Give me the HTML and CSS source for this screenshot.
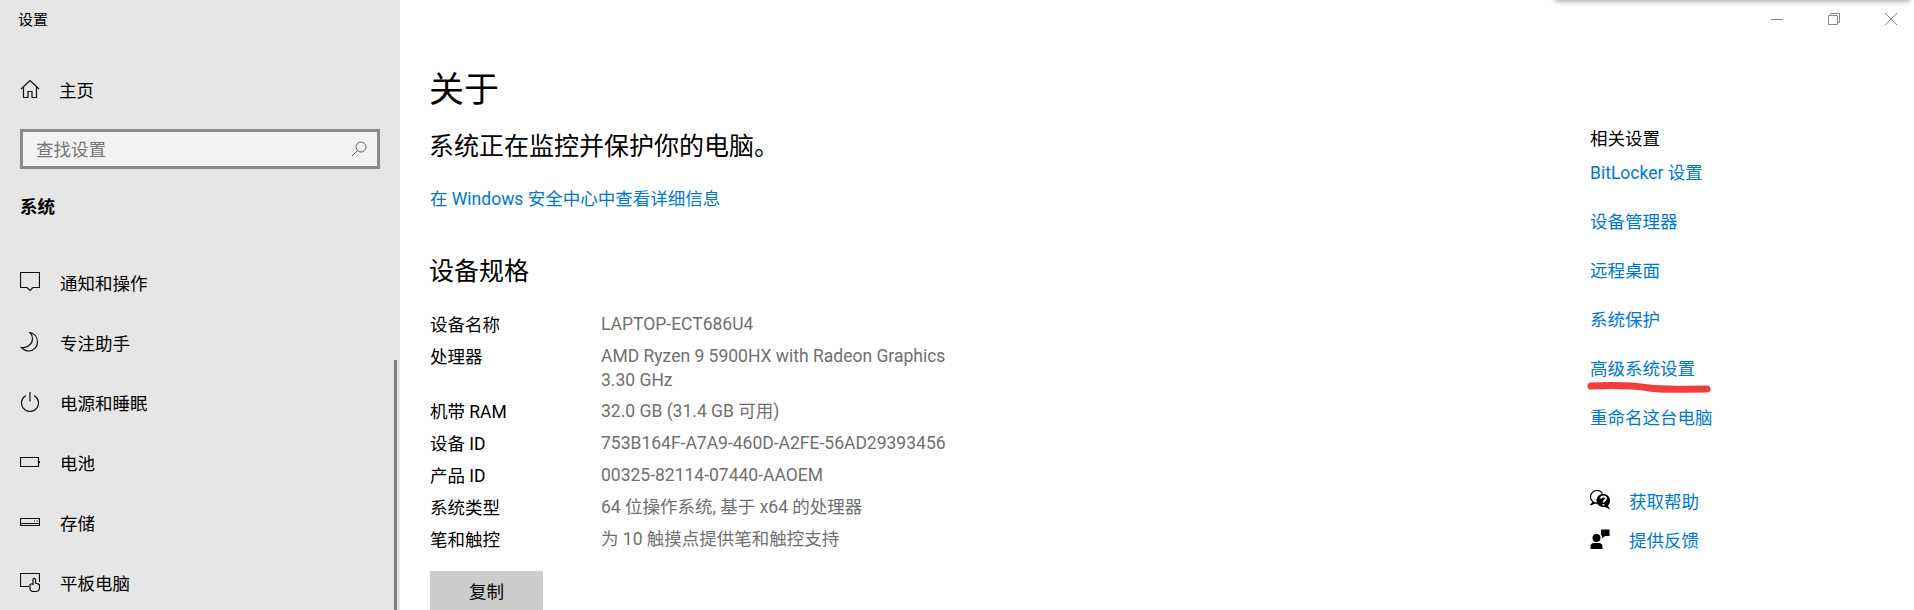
FILE: index.html
```html
<!DOCTYPE html>
<html lang="zh-CN">
  <head>
    <meta charset="UTF-8" />
    <title>设置</title>
    <link rel="stylesheet" href="styles.css">
  </head>
  <body>
    <aside class="sidebar">
      <div class="app-title">设置</div>
      <div class="home-row">
        <svg class="nav-icon" viewBox="0 0 20 20"><path d="M1 10 10 1.500 19 10M3.500 8V18.500H8V12.500H12V18.500H16.500V8"/></svg>
        <span>主页</span>
      </div>
      <div class="search-box">
        <span>查找设置</span>
        <svg class="search-icon" viewBox="0 0 16 16"><circle cx="10" cy="6" r="5"/><path d="M6.500 9.500 1 15"/></svg>
      </div>
      <div class="group-title">系统</div>
      <nav class="nav-list">
        <div class="nav-item">
          <svg class="nav-icon" viewBox="0 0 20 20"><path d="M.500 .500H19.500V15.500H13L10 18.500 7 15.500H.500Z"/></svg>
          <span>通知和操作</span>
        </div>
        <div class="nav-item">
          <svg class="nav-icon" viewBox="0 0 20 20"><path d="M10 .500C14 1.500 17.500 5 17.500 10C17.500 15 13.500 19 9 19C6 19 3.500 17.800 1.500 15.500C7 16.500 12.500 12 12.500 7C12.500 4.500 11.500 2 10 .500Z"/></svg>
          <span>专注助手</span>
        </div>
        <div class="nav-item">
          <svg class="nav-icon" viewBox="0 0 20 20"><path d="M6 3.500A8.500 8.500 0 1 0 14 3.500M10 0V9.500"/></svg>
          <span>电源和睡眠</span>
        </div>
        <div class="nav-item">
          <svg class="nav-icon" viewBox="0 0 20 20"><path d="M.500 5.500H18.500V14.500H.500ZM19.500 9V11"/></svg>
          <span>电池</span>
        </div>
        <div class="nav-item">
          <svg class="nav-icon" viewBox="0 0 20 20"><path d="M.500 6.500H19.500V13.500H.500ZM.500 11.500H19.500M14 9H15M16.500 9H17.500"/></svg>
          <span>存储</span>
        </div>
        <div class="nav-item">
          <svg class="nav-icon" viewBox="0 0 20 20"><path d="M9 14.500H.500V1.500H19.500V10M13 13V7.500C13 6 15.500 6 15.500 7.500V11L19.500 12.500V16C19.500 18 18 19.500 15.500 19.500H13.500C11.500 19.500 10 18 10 16V12.500L13 11.500"/></svg>
          <span>平板电脑</span>
        </div>
      </nav>
      <div class="scroll-thumb"></div>
    </aside>

    <main class="content">
      <section class="about">
        <h1>关于</h1>
        <p class="status">系统正在监控并保护你的电脑。</p>
        <a class="link security-link">在 Windows 安全中心中查看详细信息</a>
        <h2>设备规格</h2>
        <dl class="specs">
          <dt>设备名称</dt><dd>LAPTOP-ECT686U4</dd>
          <dt>处理器</dt><dd>AMD Ryzen 9 5900HX with Radeon Graphics<br>3.30 GHz</dd>
          <dt>机带 RAM</dt><dd>32.0 GB (31.4 GB 可用)</dd>
          <dt>设备 ID</dt><dd>753B164F-A7A9-460D-A2FE-56AD29393456</dd>
          <dt>产品 ID</dt><dd>00325-82114-07440-AAOEM</dd>
          <dt>系统类型</dt><dd>64 位操作系统, 基于 x64 的处理器</dd>
          <dt>笔和触控</dt><dd>为 10 触摸点提供笔和触控支持</dd>
        </dl>
        <button class="copy-btn">复制</button>
      </section>

      <aside class="related">
        <div class="related-title">相关设置</div>
        <a class="link related-link">BitLocker 设置</a>
        <a class="link related-link">设备管理器</a>
        <a class="link related-link">远程桌面</a>
        <a class="link related-link">系统保护</a>
        <a class="link related-link marked">高级系统设置
          <svg class="red-mark" viewBox="0 0 124 12"><path d="M4 4C30 3 50 4 62 6C75 8 90 7 120 7"/></svg>
        </a>
        <a class="link related-link">重命名这台电脑</a>
        <div class="help-list">
          <div class="help-row">
            <svg class="help-icon" viewBox="0 0 20 20">
              <path class="line" d="M8 13C4 13.500 .500 11 .500 7C.500 3.500 3.500 .500 7 .500C9.500 .500 11.500 1.800 12.500 3.500M3.500 12 .500 15 5 13"/>
              <path d="M13 4C17 4 20 6.500 20 10.500C20 13 19 14.500 18 15.500L20 19.500 15 17C10.500 17.500 6.500 15 6.500 10.500C6.500 6.500 9.500 4 13 4Z"/>
              <path class="mark" d="M11 8.500C11 5.800 16 5.800 16 8.500C16 10.500 13.500 10.500 13.500 12.500M13.500 14V15.500"/>
            </svg>
            <a class="link">获取帮助</a>
          </div>
          <div class="help-row">
            <svg class="help-icon" viewBox="0 0 20 20">
              <circle cx="6.500" cy="9" r="4"/>
              <path d="M.500 20V17C.500 15 2.500 14 4 14H9C10.500 14 12.500 15 12.500 17V20Z"/>
              <path d="M11 .500H19.500V7H15L12 9.500V6.500H11Z"/>
            </svg>
            <a class="link">提供反馈</a>
          </div>
        </div>
      </aside>
    </main>

    <div class="window-shadow"></div>
    <div class="window-controls">
      <svg viewBox="0 0 12 12"><path d="M0 6.500H12"/></svg>
      <svg viewBox="0 0 12 12"><path d="M.500 2.500H9.500V11.500H.500ZM2.500 2.500V.500H11.500V9.500H9.500"/></svg>
      <svg viewBox="0 0 12 12"><path d="M0 0 12 12M12 0 0 12"/></svg>
    </div>
  </body>
</html>
```

FILE: styles.css
```css
* {
  box-sizing: border-box;
}

html,
body {
  margin: 0;
  height: 610px;
  overflow: hidden;
}

body {
  display: flex;
  background-color: #fff;
  color: #000;
  font-family: Roboto, "Noto Sans CJK SC", sans-serif;
  font-size: 17.5px;
}

/* left navigation */
.sidebar {
  position: relative;
  width: 400px;
  height: 610px;
  flex-shrink: 0;
  padding-top: 10px;
  background-color: #e6e6e6;
  overflow: hidden;
}

.app-title {
  margin-left: 18px;
  font-size: 15px;
  line-height: 20px;
}

.home-row,
.nav-item {
  display: flex;
  align-items: center;
  gap: 20px;
  height: 60px;
  padding-left: 20px;
}

.home-row {
  margin-top: 29px;
  gap: 19px;
}

.nav-icon {
  width: 20px;
  height: 20px;
  flex-shrink: 0;
  fill: none;
  stroke: #111;
  stroke-width: 1.2;
}

.search-box {
  display: flex;
  align-items: center;
  justify-content: space-between;
  width: 360px;
  height: 40px;
  margin: 10px 0 0 20px;
  padding: 0 10px 2px 13px;
  border: 3px solid #8a8a8a;
  background-color: #f2f2f2;
  color: #767676;
}

.search-icon {
  width: 16px;
  height: 16px;
  margin-top: 2px;
  fill: none;
  stroke: #666;
  stroke-width: 1;
}

.group-title {
  margin: 26px 0 0 20px;
  font-weight: 700;
  line-height: 24px;
}

.nav-list {
  margin-top: 33px;
}

.scroll-thumb {
  position: absolute;
  right: 3px;
  top: 360px;
  bottom: 0;
  width: 3px;
  background-color: #7d7d7d;
}

/* main column */
.content {
  display: flex;
  flex: 1;
  min-width: 0;
}

.about {
  width: 1160px;
  padding: 67px 0 0 30px;
}

h1 {
  margin: 0 0 0 -1px;
  font-size: 35px;
  font-weight: 400;
  line-height: 48px;
}

.status {
  margin: 15px 0 0 -1px;
  font-size: 25px;
  line-height: 34px;
}

.link {
  display: block;
  color: #0078d7;
}

.security-link {
  margin-top: 23px;
  line-height: 24px;
}

h2 {
  margin: 44px 0 0 -1px;
  font-size: 25px;
  font-weight: 400;
  line-height: 34px;
}

.specs {
  display: grid;
  grid-template-columns: 171px 1fr;
  row-gap: 8px;
  margin: 24px 0 0;
  line-height: 24px;
}

.specs dt {
  margin: 0;
}

.specs dd {
  margin: 0;
  color: #707070;
  line-height: 23.5px;
}

.copy-btn {
  display: block;
  width: 113px;
  height: 42px;
  margin-top: 19px;
  padding: 0 0 4px;
  border: none;
  background-color: #ccc;
  color: #000;
  font: inherit;
}

/* right column */
.related {
  flex: 1;
  padding: 127px 0 0 30px;
}

.related-title {
  line-height: 24px;
}

.related-link {
  height: 49px;
  line-height: 24px;
}

.related-title + .related-link {
  margin-top: 10px;
}

.marked {
  position: relative;
}

.red-mark {
  position: absolute;
  left: -3px;
  top: 25px;
  width: 124px;
  height: 12px;
  fill: none;
  stroke: #f33c3c;
  stroke-width: 7;
  stroke-linecap: round;
}

.help-list {
  display: flex;
  flex-direction: column;
  gap: 15px;
  margin-top: 33px;
}

.help-row {
  display: flex;
  align-items: center;
  gap: 19px;
  height: 24px;
}

.help-icon {
  width: 20px;
  height: 20px;
  flex-shrink: 0;
  fill: #000;
}

.help-icon .line {
  fill: none;
  stroke: #000;
  stroke-width: 1.2;
}

.help-icon .mark {
  fill: none;
  stroke: #fff;
  stroke-width: 1.8;
}

/* window chrome */
.window-shadow {
  position: absolute;
  left: 1555px;
  top: -4px;
  width: 355px;
  height: 4px;
  box-shadow: 0 1px 5px rgba(0, 0, 0, 0.45);
}

.window-controls {
  position: absolute;
  right: 17px;
  top: 13px;
  display: flex;
  gap: 45px;
}

.window-controls svg {
  width: 12px;
  height: 12px;
  fill: none;
  stroke: #8a8a8a;
  stroke-width: 1;
}
```
